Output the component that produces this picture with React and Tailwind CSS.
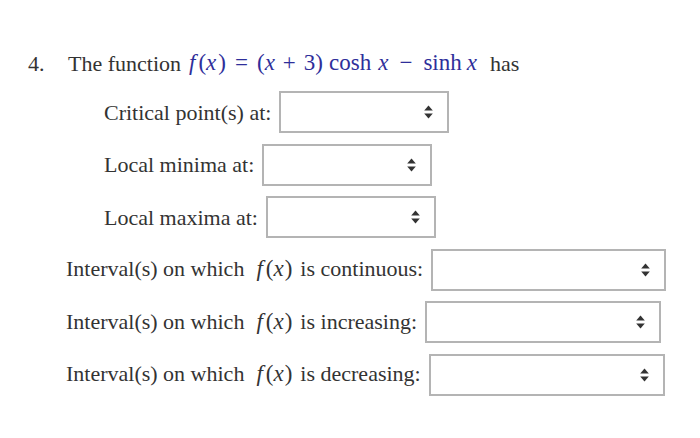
import React from 'react';

const Arrows = () => (
    <svg width="9" height="14" viewBox="0 0 9 14" className="shrink-0">
        <path d="M4.5 0.5 L8.8 5.5 L0.2 5.5 Z" fill="#333" />
        <path d="M4.5 13.5 L8.8 8.5 L0.2 8.5 Z" fill="#333" />
    </svg>
);

const Box = ({ w }) => (
    <div className={`ml-[8px] h-[42px] border-2 border-[#b4b4b4] bg-white flex items-center justify-end pr-[14px] ${w}`}>
        <Arrows />
    </div>
);

const F = () => (
    <span className="text-[23px] ml-[12px] mr-[8px]"><i className="mr-[3px]">f</i>(<i className="mr-[1px]">x</i>)</span>
);

const App = () => {
    return (
        <div className="w-[700px] h-[438px] bg-white pt-[49px] text-[#333] text-[22px]" style={{ fontFamily: '"Liberation Serif", serif' }}>
            <div className="flex items-center h-[28px] pl-[28px]">
                <span className="w-[40px]">4.</span>
                <span>The function</span>
                <span className="text-[#2e2e9a] text-[23px] ml-[8px] whitespace-nowrap">
                    <i className="mr-[3px]">f</i>(<i className="mr-[2px]">x</i>)
                    <span className="mx-[9px]">=</span>
                    (<i>x</i>
                    <span className="mx-[8px]">+</span>
                    3)
                    <span className="ml-[6px]">cosh</span>
                    <i className="ml-[7px]">x</i>
                    <span className="mx-[11px]">−</span>
                    sinh
                    <i className="ml-[5px]">x</i>
                </span>
                <span className="ml-[13px]">has</span>
            </div>
            <div className="mt-[14px] flex flex-col gap-[10.5px]">
                <div className="flex items-center pl-[104px]">
                    <span>Critical point(s) at:</span>
                    <Box w="w-[170px]" />
                </div>
                <div className="flex items-center pl-[104px]">
                    <span>Local minima at:</span>
                    <Box w="w-[170px]" />
                </div>
                <div className="flex items-center pl-[104px]">
                    <span>Local maxima at:</span>
                    <Box w="w-[170px]" />
                </div>
                <div className="flex items-center pl-[66px]">
                    <span className="flex items-baseline">Interval(s) on which<F />is continuous:</span>
                    <Box w="w-[235px]" />
                </div>
                <div className="flex items-center pl-[66px]">
                    <span className="flex items-baseline">Interval(s) on which<F />is increasing:</span>
                    <Box w="w-[236px]" />
                </div>
                <div className="flex items-center pl-[66px]">
                    <span className="flex items-baseline">Interval(s) on which<F />is decreasing:</span>
                    <Box w="w-[236px]" />
                </div>
            </div>
        </div>
    );
};

export default App;
